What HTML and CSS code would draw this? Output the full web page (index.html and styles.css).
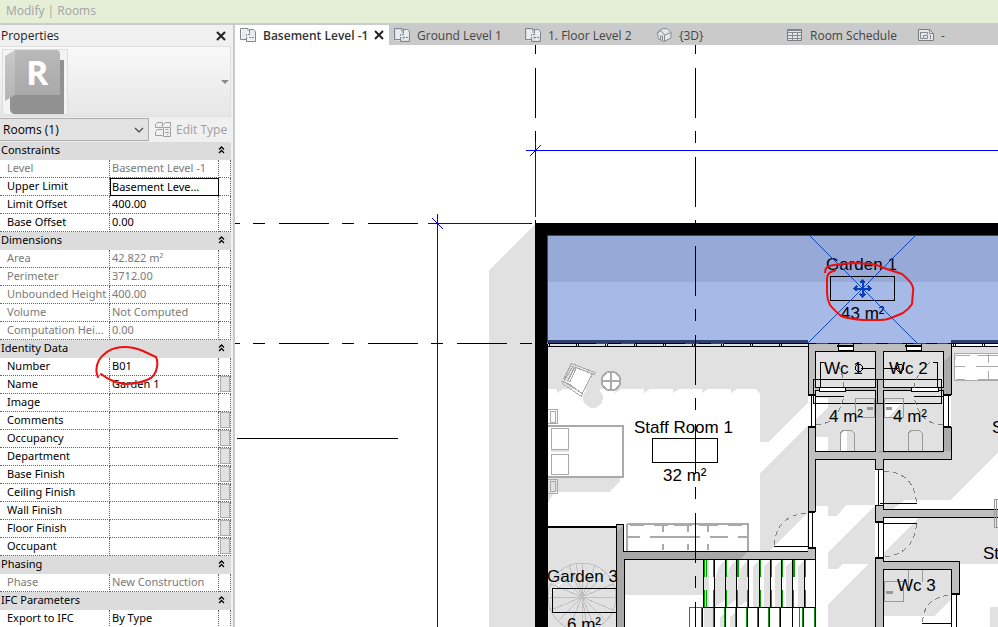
FILE: index.html
```
<!DOCTYPE html>
<html lang="en">
  <head>
    <meta charset="utf-8">
    <title>Basement Level -1</title>
    <link rel="stylesheet" href="styles.css">
  </head>
  <body>
    <svg class="symbols" aria-hidden="true">
      <symbol id="icon-plan" viewBox="0 0 16 14">
        <path class="icon-paper" d="M7 3.500V1.500H1.500V12.500H8.500M8.500 12.500H14.500V5.500"/>
        <path class="icon-paper" d="M6.500 11.500V5.500H8.500M6.500 8.500H15.500V4.500L13.500 1.500H9.500V4.500"/>
        <path class="icon-line" d="M8 3V.500H.500V11.500H6M6.500 11V13.500H15.500V3.500L13.500 1.500H9.500V5.500"/>
        <path class="icon-line" stroke-dasharray="2 1" d="M6.500 11V6.500H10M9 9.500H15"/>
      </symbol>
      <symbol id="icon-fold" viewBox="0 0 7 8">
        <path d="M1 3.500L3.500 1L6 3.500M1 7L3.500 4.500L6 7" fill="none" stroke="#000" stroke-width="1.300"/>
      </symbol>
    </svg>

    <header class="ribbon">Modify | Rooms</header>

    <main class="workspace">
      <aside class="panel">
        <div class="panel-title">
          <span>Properties</span>
          <button class="close" aria-label="Close properties">
            <svg width="10" height="10" viewBox="0 0 10 10"><path d="M1 1L9 9M9 1L1 9" stroke="#222" stroke-width="2"/></svg>
          </button>
        </div>

        <button class="type-selector" aria-label="Type selector">
          <span class="type-thumb">
            <svg width="64" height="64" viewBox="0 0 64 64">
              <defs>
                <linearGradient id="face" x1="0" y1="0" x2="0" y2="1"><stop offset="0" stop-color="#b9b9b9"/><stop offset="1" stop-color="#a9a9a9"/></linearGradient>
                <linearGradient id="side" x1="0" y1="0" x2="0" y2="1"><stop offset="0" stop-color="#c9c9c9"/><stop offset="1" stop-color="#b4b4b4"/></linearGradient>
              </defs>
              <path d="M7 45H12L54 10H61V64H11Q7 63 7 59Z" fill="#919191"/>
              <path d="M2 6L12 0V45L2 51Z" fill="url(#side)"/>
              <path d="M12 0H53Q57 0 57 4V45H12Z" fill="url(#face)"/>
              <text x="23" y="35" class="thumb-letter">R</text>
            </svg>
          </span>
          <svg class="type-arrow" width="8" height="4" viewBox="0 0 8 4"><path d="M0 0H8L4 4Z" fill="#8c8c8c"/></svg>
        </button>

        <div class="filter-row">
          <div class="filter">
            <select aria-label="Selected elements"><option>Rooms (1)</option></select>
            <svg width="10" height="6" viewBox="0 0 10 6"><path d="M1 1L5 5L9 1" fill="none" stroke="#444" stroke-width="1.200"/></svg>
          </div>
          <button class="edit-type">
            <svg width="17" height="17" viewBox="0 0 17 17" fill="none" stroke="#a0a0a0">
              <path d="M.500 3.500L2.500 1.500H7.500V6.500H.500ZM8.500 3.500L10.500 1.500H15.500V5.500M.500 10.500L2.500 8.500H7.500M.500 10.500V14.500H7.500M8.500 6.500H15.500V15.500H8.500ZM10.500 8.500H13.500M10 11.500H14M12 13.500H13"/>
            </svg>
            Edit Type
          </button>
        </div>

        <table class="props">
          <colgroup><col class="col-name"><col class="col-value"><col class="col-more"></colgroup>
          <tbody>
            <tr class="group"><th colspan="3"><div><span>Constraints</span><button aria-label="Collapse Constraints"><svg><use href="#icon-fold"/></svg></button></div></th></tr>
            <tr class="locked"><th>Level</th><td>Basement Level -1</td><td></td></tr>
            <tr><th><label for="upper">Upper Limit</label></th><td class="active"><select id="upper"><option>Basement Leve...</option></select></td><td></td></tr>
            <tr><th><label for="limit">Limit Offset</label></th><td><input id="limit" value="400.00"></td><td></td></tr>
            <tr><th><label for="base">Base Offset</label></th><td><input id="base" value="0.00"></td><td></td></tr>
          </tbody>
          <tbody>
            <tr class="group"><th colspan="3"><div><span>Dimensions</span><button aria-label="Collapse Dimensions"><svg><use href="#icon-fold"/></svg></button></div></th></tr>
            <tr class="locked"><th>Area</th><td>42.822 m²</td><td></td></tr>
            <tr class="locked"><th>Perimeter</th><td>3712.00</td><td></td></tr>
            <tr class="locked"><th>Unbounded Height</th><td>400.00</td><td></td></tr>
            <tr class="locked"><th>Volume</th><td>Not Computed</td><td></td></tr>
            <tr class="locked"><th>Computation Hei...</th><td>0.00</td><td></td></tr>
          </tbody>
          <tbody>
            <tr class="group"><th colspan="3"><div><span>Identity Data</span><button aria-label="Collapse Identity Data"><svg><use href="#icon-fold"/></svg></button></div></th></tr>
            <tr><th><label for="number">Number</label></th><td><input id="number" value="B01"></td><td></td></tr>
            <tr><th><label for="name">Name</label></th><td><input id="name" value="Garden 1"></td><td><button class="browse" aria-label="Browse names"></button></td></tr>
            <tr><th><label for="image">Image</label></th><td><input id="image"></td><td></td></tr>
            <tr><th><label for="comments">Comments</label></th><td><input id="comments"></td><td><button class="browse" aria-label="Browse comments"></button></td></tr>
            <tr><th><label for="occupancy">Occupancy</label></th><td><input id="occupancy"></td><td><button class="browse" aria-label="Browse occupancy"></button></td></tr>
            <tr><th><label for="department">Department</label></th><td><input id="department"></td><td><button class="browse" aria-label="Browse departments"></button></td></tr>
            <tr><th><label for="base-finish">Base Finish</label></th><td><input id="base-finish"></td><td><button class="browse" aria-label="Browse base finishes"></button></td></tr>
            <tr><th><label for="ceiling">Ceiling Finish</label></th><td><input id="ceiling"></td><td><button class="browse" aria-label="Browse ceiling finishes"></button></td></tr>
            <tr><th><label for="wall">Wall Finish</label></th><td><input id="wall"></td><td><button class="browse" aria-label="Browse wall finishes"></button></td></tr>
            <tr><th><label for="floor">Floor Finish</label></th><td><input id="floor"></td><td><button class="browse" aria-label="Browse floor finishes"></button></td></tr>
            <tr><th><label for="occupant">Occupant</label></th><td><input id="occupant"></td><td><button class="browse" aria-label="Browse occupants"></button></td></tr>
          </tbody>
          <tbody>
            <tr class="group"><th colspan="3"><div><span>Phasing</span><button aria-label="Collapse Phasing"><svg><use href="#icon-fold"/></svg></button></div></th></tr>
            <tr class="locked"><th>Phase</th><td>New Construction</td><td></td></tr>
          </tbody>
          <tbody>
            <tr class="group"><th colspan="3"><div><span>IFC Parameters</span><button aria-label="Collapse IFC Parameters"><svg><use href="#icon-fold"/></svg></button></div></th></tr>
            <tr><th><label for="ifc">Export to IFC</label></th><td><select id="ifc"><option>By Type</option></select></td><td></td></tr>
          </tbody>
        </table>

        <!-- red pen mark round the room number -->
        <svg class="mark" width="66" height="42" viewBox="94 345 66 42">
          <path d="M98 377C95 371 96 366 99 360C103 354 110 349 116 348C125 346 136 348 143 351L156 357Q158 361 157 367C156 373 153 378 147 380Q140 383 127 384Q117 383 113 381Q106 378 101 374" fill="none" stroke="#f00f0f" stroke-width="2" stroke-linecap="round"/>
        </svg>
      </aside>

      <section class="view">
        <nav class="tabs">
          <div class="tab current">
            <a href="#plan"><svg class="tab-icon"><use href="#icon-plan"/></svg>Basement Level -1</a>
            <button class="close" aria-label="Close view"><svg width="10" height="10" viewBox="0 0 10 10"><path d="M1 1L9 9M9 1L1 9" stroke="#222" stroke-width="2"/></svg></button>
          </div>
          <a class="tab" href="#ground"><svg class="tab-icon"><use href="#icon-plan"/></svg>Ground Level 1</a>
          <a class="tab" href="#first"><svg class="tab-icon"><use href="#icon-plan"/></svg>1. Floor Level 2</a>
          <a class="tab" href="#3d">
            <svg class="tab-icon" viewBox="0 0 16 14"><path d="M1 5.500L5 1L11 .500L15 4.500V10L8 13.500L2 10.500V6Z" fill="#e4e7ea" stroke="#858b91"/><path d="M1 5.500L5 2.500L8.500 7V13.500M8.500 7L15 4.500M4.500 12V8H6.500V12.500" fill="none" stroke="#858b91"/></svg>{3D}
          </a>
          <a class="tab" href="#schedule">
            <svg class="tab-icon" viewBox="0 0 16 14"><path d="M.500 1.500H14.500V12.500H.500Z" fill="#e4e7ea" stroke="#777d83"/><path d="M1 2.500H14M1 4.500H14M1 7.500H14M1 10.500H14M5.500 4V12M10.500 4V12" stroke="#858b91"/></svg>Room Schedule
          </a>
          <a class="tab" href="#sheet">
            <svg class="tab-icon" viewBox="0 0 16 14"><path d="M.500 1.500H11.500L15.500 5.500V12.500H.500Z" fill="#e4e7ea" stroke="#777d83"/><path d="M11.500 1.500V5.500H15M2.500 4V10.500H5M2 4.500H9.500V6.500M5.500 7.500H9.500V10.500H5.500ZM12.500 7V11" fill="none" stroke="#858b91"/></svg>-
          </a>
        </nav>

        <svg class="plan" id="plan" viewBox="235 45 763 582" preserveAspectRatio="xMinYMin slice">
          <!-- floor shading -->
          <g class="shade">
            <path d="M535 225L489 270V627H535Z"/>
            <path d="M548 344H808V552H548ZM815 459H875V505H846L837 516H828V506H815ZM875 505V557L868 564H842L837 569H828V552ZM875 557V627H828V604Z"/>
            <path d="M951 347H998V627H990V607H998V564H959V561H883V518H998V453L950 500H905L893 509H883V459H951Z"/>
            <path d="M548 528H616V627H548ZM624 560H704V595H624Z"/>
          </g>
          <path class="paper" d="M548 389H760V552H624V524H616V527H548ZM760 442H769L808 402V426L760 473ZM807 513V551H770ZM884 518H918L884 552ZM548 596L562 582Q550 588 548 603ZM959 564H998V607H990V627H959Z"/>
          <g class="shade">
            <path d="M557 389H563L557 393ZM615 389H621L615 393ZM644 389H650L644 393ZM673 389H679L673 393ZM702 389H708L702 393ZM731 389H737L731 393ZM755 389H760V394Z"/>
            <circle cx="593" cy="398" r="10"/>
            <path d="M586 380H600V400H586ZM548 478H620V481L610 492H554L548 503ZM551 449H569V452H551Z"/>
          </g>

          <!-- furniture -->
          <path class="paper" d="M574 368L592 374L582 393L568 383Z"/>
          <g class="furniture">
            <path d="M571.500 363.500L595 372.500L594 374.500L573 366.500L563.500 381.500L582.500 393.500L581.500 396.500L562 383.500M592.500 373.500L582 394M571.500 363.500L563.500 379.500M574.500 367.500L567.500 381.500M576 368.500L569.500 382.500M561.500 381.500L570 384.500L582.500 394"/>
            <circle cx="611" cy="381" r="9.500" stroke-width="2" fill="#fff"/>
            <path d="M601 381H620M611 372V391" stroke-width="2"/>
            <path d="M548 409.500H557V423.500H548M550.500 411.500H555.500V422.500H550.500ZM548 479.500H557V493.500H548M550.500 481.500H555.500V491.500H550.500Z"/>
            <path d="M548 426H623V477H548" stroke-width="2"/>
            <path d="M551.500 428.500H568.500V449.500H551.500ZM551.500 454.500H568.500V474.500H551.500Z"/>
            <path d="M627 524H748V551M627 524V551" stroke-width="2"/>
            <path d="M628 537H640M650 537H700M710 537H728M738 537H747M663 526V532M663 544V550M688 526V532M688 544V550M708 526V532M708 544V550" stroke-width="2"/>
            <path d="M630 525.500H644M654 525.500H668M674 525.500H692M699 525.500H718M728 525.500H742"/>
          </g>
          <g class="spiral">
            <circle cx="582" cy="597" r="34"/>
            <path d="M582 563V631M548 597H616M558 573L606 621M606 573L558 621M569 566L595 628M595 566L569 628M551 584L613 610M551 610L613 584M576 563L588 631"/>
          </g>

          <!-- room in the selection colour -->
          <path d="M547 235H998V282H547Z" fill="#97a9d7"/>
          <path d="M547 282H998V344H547Z" fill="#a6b9e7"/>
          <path d="M547 340H808V343H547ZM951 340H998V343H951Z" fill="#2b3f70"/>
          <path d="M535 223H998V235H547V344H548V627H535Z"/>
          <path d="M998 235.500H547.500V343" class="selection"/>
          <g class="line">
            <path d="M548 343.500H998M548 346.500H808M951 346.500H998"/>
            <path d="M547 345H808M953 345H998" stroke-width="2" stroke-dasharray="1 1 1 26"/>
          </g>
          <path d="M596 343.500H608M621 343.500H635M685 343.500H699M711 343.500H724M816 343.500H828M840 343.500H852M862 343.500H876M888 343.500H902M914 343.500H926M937 343.500H948" class="selection"/>

          <!-- walls of the wet rooms -->
          <path class="wall" d="M808 344H951V396H943V351H883V387H943V391H883V451H943V427H951V459H883V470H875V459H815V512H808V427H815V451H875V391H815V387H875V351H815V396H808Z"/>
          <path class="shade" d="M815 351H875V387H815ZM815 391H875V451H815ZM883 351H943V387H883ZM883 391H943V451H883Z"/>
          <path d="M943 362L951 354V396H943ZM943 427H951V451H943ZM879 451H943V453H879Z" fill="#aaa"/>
          <path class="paper" d="M815 398H828V408L815 420ZM815 437H828V451H815ZM841 431H847V451H841ZM884 402H903L888 417H884ZM811 396H815V426H811ZM944 396H948V426H944ZM838 346H853V351H838ZM906 346H921V351H906Z"/>
          <g class="line">
            <path d="M808.500 344V394.500M951.500 344V394.500M808.500 427V512M815.500 459V512M951.500 427V459.500M815.500 351.500H875.500V387.500H815.500ZM883.500 351.500H943.500V387.500H883.500ZM815.500 390.500H875.500V451.500H815.500ZM883.500 390.500H943.500V451.500H883.500ZM815 459.500H875.500V469.500H883.500V459.500H951.500"/>
            <path d="M813.500 379.500H877.500V403.500H813.500ZM877.500 379.500H941.500V403.500H877.500ZM820.500 362V388M937.500 362V388M815 396.500H844M914 396.500H943M861 368.500H875M883 368.500H898"/>
            <path d="M838.500 344V350.500H853.500V344M906.500 344V350.500H921.500V344M811.500 396V426M948.500 396V426"/>
            <path d="M808 395H815M943 395H951M808 427H815M943 427H951M837 346H854M905 346H922" stroke-width="2"/>
            <circle cx="859" cy="368" r="3.500"/><circle cx="900" cy="368" r="3.500"/>
            <path d="M820 362.500H824M933 362.500H938"/>
            <path d="M819.500 387.500H845.500V391.500H819.500ZM911.500 387.500H938.500V391.500H911.500Z" fill="#fff"/>
          </g>
          <g class="fixture">
            <path d="M855.500 398.500H874.500V417.500H855.500ZM884.500 398.500H903.500V417.500H884.500ZM840.500 451V434Q841 430 847 430T854.500 434V451M908.500 451V434Q909 430 915 430T922.500 434V451"/>
            <path d="M867 408H873M886 408H892" stroke-width="3"/>
            <path class="swing" d="M816 425Q838 424 844 396M843 387Q845 376 836 362M943 425Q919 424 914 396M914 388Q915 376 930 362"/>
          </g>

          <!-- cupboard on the right edge -->
          <path class="paper" d="M956 354H998V380H954Z"/>
          <g class="furniture">
            <path d="M998 353.500H954V380.500H998M956 355.500H970M978 355.500H998M954 366.500H965M976 366.500H998M956 379.500H965M978 379.500H998M988.500 354V363M988.500 371V380"/>
          </g>

          <!-- lower corridor walls -->
          <path class="wall" d="M616 524H624V551H815V559H624V627H616ZM875 505H883V509H998V517H883V522H875ZM875 557H883V561H959V594H951V569H883V627H875ZM808 547H815V552H808Z"/>
          <path d="M616 532L624 524V551H748L740 559H624V627H616Z" fill="#a8a8a8"/>
          <path class="shade" d="M884 569H951V599L934 616H884Z"/>
          <path class="paper" d="M808 512H813V547H808ZM879 470H883V505H879ZM879 522H883V557H879ZM952 595H957V623H952Z"/>
          <g class="line">
            <path d="M616.500 627V524.500H623.500V551.500H808M815.500 547V627M624.500 627V559.500H815M548 527.500H616M548 526.500H616"/>
            <path d="M878.500 470V505M883.500 470V509.500H998M883.500 522V517.500H998M875.500 505V522M878.500 522V557M883.500 522V561.500H959.500V594M875.500 557V627M883.500 627V569.500H951.500V594M875 505.500H883M951.500 595V627M956.500 595V627"/>
            <path d="M808.500 512V547M812.500 512V547"/>
            <path d="M808 512H815M808 548H815M875 522H883M875 558H883M951 594H960" stroke-width="2"/>
            <path d="M774 546.500H808M880 503.500H917M883 523.500H917M922 623.500H952"/>
          </g>
          <g class="fixture">
            <path class="swing" d="M774.500 545Q776 515 808 513M884 471Q914 472 916.500 503M916.500 524Q914 554 884 557M922.500 622Q924 597 951 595"/>
            <path d="M884.500 581.500H903.500V601.500H884.500ZM908.500 570V590M922.500 570V582M998 499.500H994.500V527.500H998M996.500 500V527"/>
            <path d="M886 592H893" stroke-width="3"/>
          </g>

          <!-- stairs -->
          <path class="shade" d="M704 560H709V607H704ZM719 566L725 560V600L715 607V580ZM730 566L736 560V600L726 607V580ZM742 566L748 560V600L738 607V580ZM753 566L759 560V607H753ZM764 566L770 560V607H764ZM775 566L781 560V607H775ZM786 566L792 560V607H786ZM798 566L804 560V607H798ZM704 608H714V627H704ZM720 617L725 612V627H720ZM730 617L736 612V627H730Z"/>
          <g class="line">
            <path d="M703.500 560V607M714.500 560V607M725.500 560V607M736.500 560V607M748.500 560V607M759.500 560V607M770.500 560V607M781.500 560V607M792.500 560V607M804.500 560V607M703 607.500H815M702.500 607V627M714.500 607V627M725.500 607V627M736.500 607V627M747.500 607V627M758.500 607V627M769.500 607V627M780.500 607V627M792.500 607V627M803.500 607V627"/>
          </g>
          <path class="stair-edge" d="M704.500 560V577M706.500 560V577M713.500 560V577M726.500 560V577M737.500 560V577M738.500 560V577M747.500 560V577M760.500 560V577M771.500 560V577M782.500 560V577M793.500 560V577M794.500 560V577M805.500 560V577M704.500 590V607M706.500 590V607M713.500 590V607M726.500 590V607M737.500 590V607M747.500 590V607M760.500 590V607M771.500 590V607M782.500 590V607M793.500 590V607M805.500 590V607M703 607.500H689.500V627M701.500 608V627M713.500 608V627M724.500 608V627M735.500 608V627M746.500 608V627M757.500 608V627M768.500 608V627M779.500 608V627M799.500 608V627M802.500 608V627M814.500 608V627"/>

          <!-- grid lines -->
          <g class="line">
            <path d="M695.500 -21V627M535.500 -21V223M190 223.500H535" stroke-dasharray="50 13 12 14"/>
            <path d="M190 343.500H535" stroke-dasharray="50 13 12 14"/>
            <path d="M237 438.500H398"/>
          </g>
          <path class="dimension" d="M526 150.500H998M535.500 141V217M530 156L541 145M428 223.500H529M437.500 214V627M432 218L443 229"/>

          <!-- room tags -->
          <g class="line">
            <path d="M652.500 438.500H717.500V462.500H652.500ZM552.500 588.500H616.500V612.500H552.500ZM830.500 276.500H894.500V300.500H830.500Z"/>
          </g>
          <g class="tag">
            <text x="826" y="270">Garden 1</text>
            <text x="841" y="319">43 m²</text>
            <text x="634" y="433">Staff Room 1</text>
            <text x="663" y="481">32 m²</text>
            <text x="547" y="582">Garden 3</text>
            <text x="567" y="630">6 m²</text>
            <text x="824" y="374">Wc 1</text>
            <text x="889" y="374">Wc 2</text>
            <text x="829" y="422">4 m²</text>
            <text x="893" y="422">4 m²</text>
            <text x="897" y="591">Wc 3</text>
            <text x="992" y="433">Staff Room 2</text>
            <text x="983" y="559">Staff Room 3</text>
          </g>

          <!-- selected room cross and move grip -->
          <path class="selection" d="M810 236L917 343M915 236L808 343"/>
          <path class="grip" d="M855 288.500H870M862.500 281V296M857 286L854.500 288.500L857 291M868 286L870.500 288.500L868 291M860 283L862.500 280.500L865 283M860 294L862.500 296.500L865 294"/>
          <path class="pen" d="M825 273Q825 268 829 266Q838 264 855 263L871 264Q878 265 881 267L902 274Q908 279 911 283Q914 288 913 292L912 304Q909 309 903 313L891 318Q886 320 881 320H863Q850 319 841 316Q833 309 830 305Q827 299 827 293V278Q828 273 831 272L836 270"/>
        </svg>
      </section>
    </main>
  </body>
</html>
```
FILE: styles.css
```
* {
  box-sizing: border-box;
}

body {
  margin: 0;
  height: 100vh;
  display: flex;
  flex-direction: column;
  overflow: hidden;
  font-family: "Open Sans", "Noto Sans", sans-serif;
  font-size: 12px;
  color: #000;
  background-color: #fff;
}

button, input, select {
  font: inherit;
  color: inherit;
  background: none;
  border: none;
  margin: 0;
  padding: 0;
}

a {
  color: inherit;
  text-decoration: none;
}

.symbols {
  display: none;
}

.ribbon {
  flex: none;
  height: 25px;
  padding-left: 6px;
  line-height: 22px;
  color: #a3a3a3;
  background-color: #e5efd7;
  border-bottom: 2px solid #cbcbcb;
}

.workspace {
  flex: 1;
  min-height: 0;
  display: flex;
}

/* properties panel */

.panel {
  position: relative;
  flex: none;
  width: 235px;
  padding-right: 2px;
  overflow: hidden;
  background-color: #f0f0f0;
  border-right: 2px solid #cacaca;
}

.panel-title {
  display: flex;
  justify-content: space-between;
  align-items: center;
  height: 21px;
  padding: 0 5px 0 1px;
  color: #222;
}

.close {
  display: flex;
}

.type-selector {
  display: flex;
  justify-content: space-between;
  align-items: center;
  width: 231px;
  height: 71px;
  padding: 0 1px 0 2px;
  background: linear-gradient(#f9f9f9, #e6e6e6);
  border: 1px solid #e0e0e0;
  border-left: none;
}

.type-thumb {
  display: flex;
  border: 1px solid #dedede;
  background-color: #f4f4f4;
}

.thumb-letter {
  font-family: "Open Sans", sans-serif;
  font-size: 34px;
  font-weight: bold;
  fill: #fff;
}

.filter-row {
  display: flex;
  align-items: center;
  height: 25px;
  gap: 6px;
}

.filter {
  display: flex;
  align-items: center;
  width: 149px;
  height: 23px;
  padding-right: 4px;
  background-color: #e3e3e3;
  border: 1px solid #adadad;
  border-left: none;
}

.filter select {
  flex: 1;
  padding-left: 3px;
}

select {
  appearance: none;
}

.edit-type {
  display: flex;
  align-items: center;
  gap: 4px;
  color: #a0a0a0;
}

.props {
  width: 231px;
  table-layout: fixed;
  border-collapse: separate;
  border-spacing: 0;
  font-family: "Noto Sans", "Open Sans", sans-serif;
  font-size: 11px;
  line-height: 16px;
}

.col-name {
  width: 110px;
}

.col-value {
  width: 109px;
}

.col-more {
  width: 12px;
}

.props th,
.props td {
  height: 18px;
  padding: 0;
  overflow: hidden;
  font-weight: normal;
  text-align: left;
  vertical-align: top;
  white-space: nowrap;
  background-color: #fff;
  border-right: 1px dotted #666;
  border-bottom: 1px dotted #666;
}

.props th {
  padding-left: 7px;
}

.props td {
  padding-left: 2px;
}

.props td:last-child {
  padding-left: 1px;
}

.props .group th {
  padding: 0 6px 0 1px;
  background-color: #dcdcdc;
  border: none;
}

.group div {
  display: flex;
  justify-content: space-between;
  align-items: center;
}

.group button {
  display: flex;
}

.group svg {
  width: 7px;
  height: 8px;
}

.props .locked th,
.props .locked td {
  color: #7a7a7a;
}

.props input,
.props select {
  display: block;
  width: 100%;
  height: 16px;
}

.props .active {
  padding-left: 1px;
  border: 1px solid #000;
}

.browse {
  display: block;
  width: 10px;
  height: 16px;
  background-color: #e1e1e1;
  border: 1px solid #adadad;
}

.mark {
  position: absolute;
  left: 94px;
  top: 320px;
}

/* view tabs and drawing */

.view {
  flex: 1;
  min-width: 0;
  display: flex;
  flex-direction: column;
}

.tabs {
  flex: none;
  display: flex;
  height: 20px;
  overflow: hidden;
  color: #444;
  background-color: #cacaca;
}

.tab {
  flex: none;
  display: flex;
  align-items: center;
  width: 131px;
  padding-left: 5px;
  white-space: nowrap;
}

.tab a {
  display: flex;
  align-items: center;
}

.tab.current {
  justify-content: space-between;
  width: 154px;
  padding-right: 5px;
  font-weight: 600;
  color: #333;
  background-color: #fff;
}

.tab-icon {
  flex: none;
  width: 16px;
  height: 14px;
  margin-right: 7px;
}

.icon-paper {
  fill: #e8ebef;
}

.icon-line {
  fill: none;
  stroke: #80868c;
}

.current .icon-line {
  stroke: #3c4654;
}

.plan {
  flex: 1;
  min-height: 0;
  width: 100%;
  background-color: #fff;
  shape-rendering: crispEdges;
}

.shade {
  fill: #e1e1e1;
}

.paper {
  fill: #fff;
}

.wall {
  fill: #bfbfbf;
}

.line {
  fill: none;
  stroke: #000;
}

.furniture {
  fill: none;
  stroke: #aaa;
}

.spiral {
  fill: none;
  stroke: #c0c0c0;
}

.fixture {
  fill: none;
  stroke: #999;
}

.swing {
  stroke: #808080;
  stroke-dasharray: 5 4;
}

.stair-edge {
  fill: none;
  stroke: #00a000;
}

.selection {
  fill: none;
  stroke: #1447b8;
}

.dimension {
  fill: none;
  stroke: #00f;
}

.grip {
  fill: none;
  stroke: #0a3fc0;
  stroke-width: 2;
}

.pen {
  fill: none;
  stroke: #f00f0f;
  stroke-width: 2;
  shape-rendering: auto;
}

.tag {
  font-family: "Liberation Sans", Arial, sans-serif;
  font-size: 17px;
}
```
